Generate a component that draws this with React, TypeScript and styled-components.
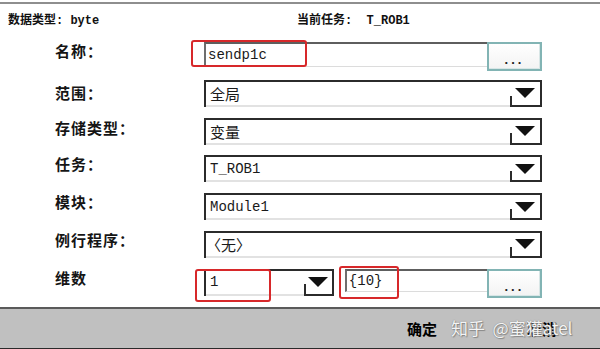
import React from "react";
import styled, { createGlobalStyle } from "styled-components";

const GlobalStyle = createGlobalStyle`
  html, body {
    margin: 0;
    padding: 0;
    background: #ffffff;
  }
`;

const cjk = `"Noto Sans CJK SC", sans-serif`;
const mono = `"Liberation Mono", "Noto Sans CJK SC", monospace`;

const Page = styled.div`
  position: relative;
  width: 600px;
  height: 349px;
  padding-top: 2px;
  box-sizing: border-box;
  display: flex;
  flex-direction: column;
  overflow: hidden;
  background: #fff;
`;

const Header = styled.div`
  display: grid;
  grid-template-columns: 289px 1fr;
  align-items: center;
  height: 27px;
  padding: 1px 0 0 8px;
  border-top: 2px solid #8e8e8e;
  font-family: ${mono};
  font-weight: bold;
  font-size: 12px;
  color: #111;
  span {
    white-space: pre;
  }
`;

const Form = styled.div`
  display: grid;
  grid-template-columns: 149px 338px;
  grid-auto-rows: 37.75px;
  padding: 10px 0 0 55px;
`;

const Label = styled.div<{ $drop?: number }>`
  font-family: ${cjk};
  font-weight: bold;
  font-size: 15px;
  letter-spacing: 1px;
  line-height: 17px;
  color: #151515;
  padding-top: ${(p) => (p.$drop ?? 0) - 2}px;
`;

const FieldRow = styled.div`
  display: flex;
  align-items: flex-start;
`;

const Marked = styled.div`
  position: relative;
`;

const RedMark = styled.div<{ $l: number; $t: number; $w: number; $h: number }>`
  position: absolute;
  left: ${(p) => p.$l}px;
  top: ${(p) => p.$t}px;
  width: ${(p) => p.$w}px;
  height: ${(p) => p.$h}px;
  border: 2px solid #d7282a;
  border-radius: 3px;
  box-sizing: border-box;
  pointer-events: none;
`;

const TextBox = styled.div<{ $w: number; $h: number }>`
  width: ${(p) => p.$w}px;
  height: ${(p) => p.$h}px;
  box-sizing: border-box;
  border-top: 2px solid #5e5e5e;
  border-left: 2px solid #6e6e6e;
  border-bottom: 1px solid #dcdcdc;
  display: flex;
  align-items: center;
  padding-left: 2px;
  font-family: ${mono};
  font-size: 14px;
  color: #1a1a1a;
`;

const DotsButton = styled.div`
  width: 56px;
  height: 29px;
  box-sizing: border-box;
  border: 2px solid #82b4b4;
  background: linear-gradient(#ffffff, #f3f3f3);
  box-shadow: inset -1px -1px 0 #d8e6e6;
  display: flex;
  align-items: flex-end;
  justify-content: center;
  padding-bottom: 4px;
  font-family: "Liberation Sans", sans-serif;
  font-weight: bold;
  font-size: 13px;
  letter-spacing: 3px;
  line-height: 10px;
  color: #222;
`;

const Select = styled.div<{ $w: number }>`
  width: ${(p) => p.$w}px;
  height: 27px;
  box-sizing: border-box;
  border-top: 2px solid #2b2b2b;
  border-left: 2px solid #2b2b2b;
  border-right: 2px solid #2b2b2b;
  display: flex;
`;

const SelectValue = styled.div<{ $cjk?: boolean; $indent?: number }>`
  flex: 1;
  display: flex;
  align-items: center;
  padding-left: ${(p) => p.$indent ?? 4}px;
  border-bottom: 2px solid #e2e2e2;
  font-family: ${(p) => (p.$cjk ? cjk : mono)};
  font-size: ${(p) => (p.$cjk ? 15 : 14)}px;
  color: #1a1a1a;
`;

const ArrowBox = styled.div<{ $w: number }>`
  position: relative;
  width: ${(p) => p.$w}px;
  border-bottom: 2px solid #2b2b2b;
  display: flex;
  align-items: center;
  justify-content: center;
  &::before {
    content: "";
    position: absolute;
    left: 0;
    bottom: 0;
    width: 2px;
    height: 40%;
    background: #2b2b2b;
  }
`;

const Gap = styled.div<{ $w: number }>`
  width: ${(p) => p.$w}px;
`;

const Footer = styled.div`
  position: relative;
  margin-top: auto;
  height: 42px;
  box-sizing: border-box;
  background: #c0c0c0;
  border-top: 2px solid #5a5a5a;
  border-bottom: 1px solid #2a2a2a;
  display: flex;
  align-items: center;
  padding-left: 407px;
  gap: 90px;
  font-family: ${cjk};
  font-weight: bold;
  font-size: 15px;
  color: #000;
`;

const Watermark = styled.div`
  position: absolute;
  left: 451px;
  top: 6px;
  font-family: ${cjk};
  font-weight: normal;
  font-size: 17px;
  color: #f4f4f4;
  white-space: pre;
  text-shadow: 0 0 1px #6a6a6a, 1px 1px 1px #8a8a8a;
`;

const Arrow = () => (
  <svg width="20" height="10" viewBox="0 0 20 10">
    <polygon points="0,0 20,0 10,10" fill="#111" />
  </svg>
);

const Dropdown = ({ value, cjkText, indent }: { value: string; cjkText?: boolean; indent?: number }) => (
  <Select $w={338}>
    <SelectValue $cjk={cjkText} $indent={indent}>{value}</SelectValue>
    <ArrowBox $w={30}>
      <Arrow />
    </ArrowBox>
  </Select>
);

export default function App() {
  return (
    <>
      <GlobalStyle />
      <Page>
        <Header>
          <span>数据类型: byte</span>
          <span>当前任务:  T_ROB1</span>
        </Header>
        <Form>
          <Label>名称：</Label>
          <FieldRow>
            <Marked>
              <TextBox $w={283} $h={25}>sendp1c</TextBox>
              <RedMark $l={-13} $t={-2} $w={116} $h={27} />
            </Marked>
            <DotsButton>...</DotsButton>
          </FieldRow>

          <Label $drop={6}>范围：</Label>
          <Dropdown value="全局" cjkText />

          <Label $drop={3}>存储类型：</Label>
          <Dropdown value="变量" cjkText />

          <Label>任务：</Label>
          <Dropdown value="T_ROB1" />

          <Label>模块：</Label>
          <Dropdown value="Module1" />

          <Label>例行程序：</Label>
          <Dropdown value="〈无〉" cjkText indent={0} />

          <Label>维数</Label>
          <FieldRow>
            <Marked>
              <Select $w={130}>
                <SelectValue>1</SelectValue>
                <ArrowBox $w={28}>
                  <Arrow />
                </ArrowBox>
              </Select>
              <RedMark $l={-9} $t={0} $w={76} $h={33} />
            </Marked>
            <Gap $w={11} />
            <Marked>
              <TextBox $w={142} $h={23}>{"{10}"}</TextBox>
              <RedMark $l={-6} $t={-3} $w={60} $h={33} />
            </Marked>
            <DotsButton>...</DotsButton>
          </FieldRow>
        </Form>
        <Footer>
          <span>确定</span>
          <span>取消</span>
          <Watermark>知乎  @蜜獾atel</Watermark>
        </Footer>
      </Page>
    </>
  );
}
